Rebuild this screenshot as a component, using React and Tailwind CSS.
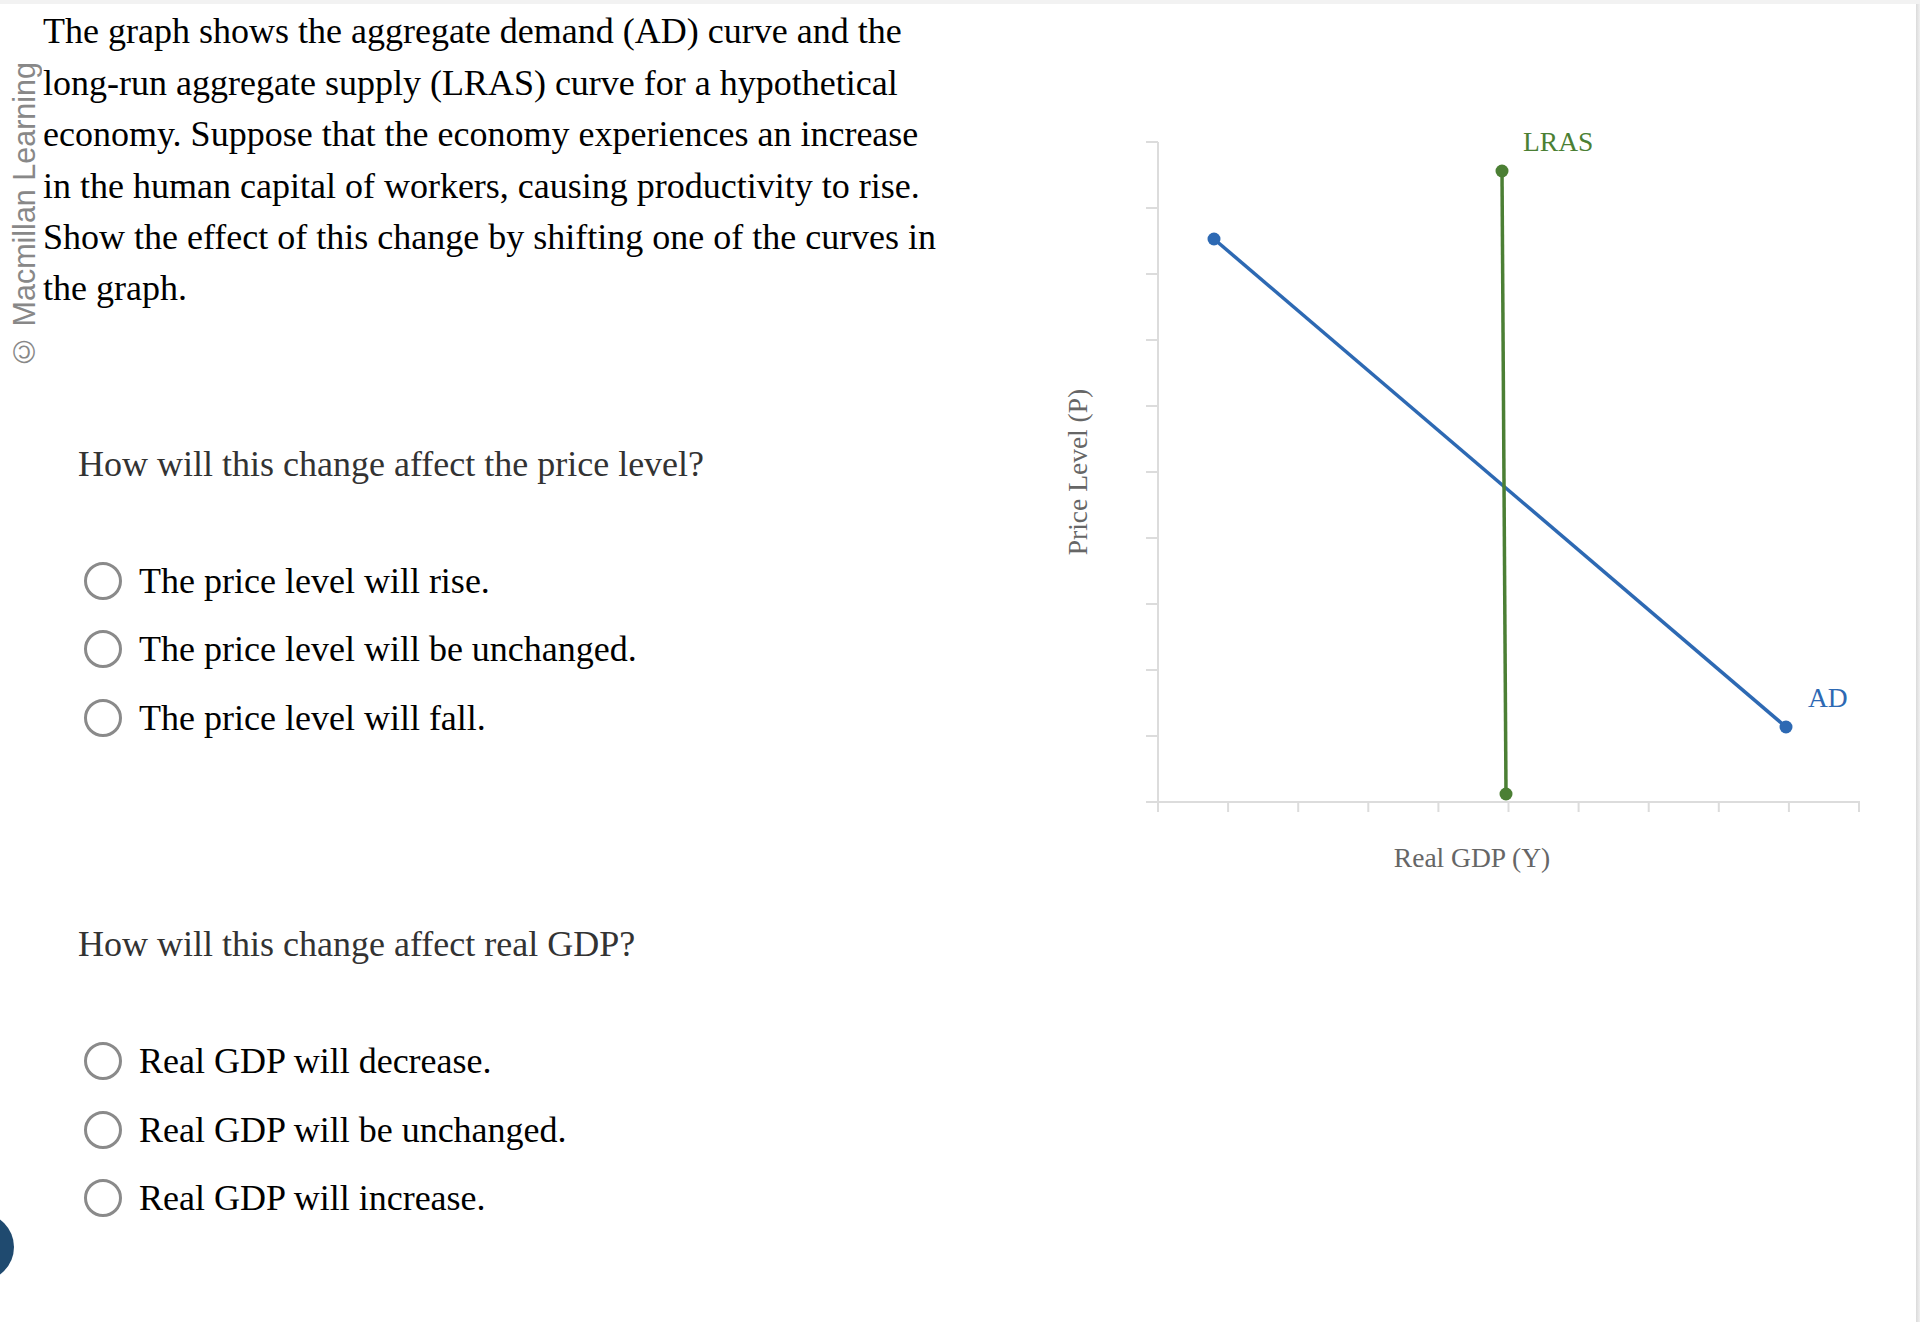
import React from "react";

const serif = "font-['Liberation_Serif','Times_New_Roman',serif]";

function Radio({ label }) {
  return (
    <div className="flex h-[68.5px] items-center">
      <span className="ml-[41px] block h-[38px] w-[38px] shrink-0 rounded-full border-[3px] border-[#8a8a8a] bg-white" />
      <span className="ml-[17px] text-[36px] leading-[40px] text-black">{label}</span>
    </div>
  );
}

function Question({ q, options, gapTop }) {
  return (
    <div className={gapTop}>
      <p className="ml-[35px] text-[36px] leading-[40px] text-[#333]">{q}</p>
      <div className="mt-[63px]">
        {options.map((o) => (
          <Radio key={o} label={o} />
        ))}
      </div>
    </div>
  );
}

function Graph() {
  const yTicks = Array.from({ length: 11 }, (_, i) => 138 + 66 * i);
  const xTicks = Array.from({ length: 11 }, (_, i) => 118 + 70.1 * i);
  const blue = "#2d69b3";
  const green = "#4b7f34";
  return (
    <svg width="876" height="900" viewBox="0 0 876 900" className={`block ${serif}`}>
      <line x1="118" y1="138" x2="118" y2="799" stroke="#dcdcdc" strokeWidth="2" />
      <line x1="106" y1="798" x2="820" y2="798" stroke="#dcdcdc" strokeWidth="2" />
      {yTicks.map((y) => (
        <line key={"y" + y} x1="106" y1={y} x2="118" y2={y} stroke="#dcdcdc" strokeWidth="2" />
      ))}
      {xTicks.map((x) => (
        <line key={"x" + x} x1={x} y1="798" x2={x} y2="808" stroke="#dcdcdc" strokeWidth="2" />
      ))}
      <line x1="174" y1="235" x2="746" y2="723" stroke={blue} strokeWidth="3.5" />
      <circle cx="174" cy="235" r="6.5" fill={blue} />
      <circle cx="746" cy="723" r="6.5" fill={blue} />
      <line x1="462" y1="167" x2="466" y2="790" stroke={green} strokeWidth="3.5" />
      <circle cx="462" cy="167" r="6.5" fill={green} />
      <circle cx="466" cy="790" r="6.5" fill={green} />
      <text x="483" y="147" fontSize="27.5" fill={green}>LRAS</text>
      <text x="768" y="703" fontSize="27.5" fill={blue}>AD</text>
      <text x="432" y="863" fontSize="27.5" fill="#666" textAnchor="middle">Real GDP (Y)</text>
      <g transform="translate(47 468) rotate(-90)">
        <text x="0" y="0" fontSize="27.5" fill="#666" textAnchor="middle">Price Level (P)</text>
      </g>
    </svg>
  );
}

export default function App() {
  return (
    <div className={`relative flex h-[1322px] w-[1920px] flex-col overflow-hidden bg-white ${serif}`}>
      <div className="h-[4px] w-full shrink-0 bg-[#f2f2f2]" />
      <div className="flex flex-1">
        <div className="flex flex-1">
          <div className="flex w-[1040px] shrink-0">
            <div className="w-[43px] shrink-0">
              <div className="ml-[9px] mt-[58px] rotate-180 font-['Liberation_Sans',Arial,sans-serif] text-[30.5px] leading-[30px] whitespace-nowrap text-[#888] [writing-mode:vertical-rl]">
                © Macmillan Learning
              </div>
            </div>
            <div className="flex-1">
              <p className="mt-[2.3px] w-[902px] text-[36px] leading-[51.4px] text-black">
                The graph shows the aggregate demand (AD) curve and the long-run aggregate supply (LRAS) curve for a hypothetical economy. Suppose that the economy experiences an increase in the human capital of workers, causing productivity to rise. Show the effect of this change by shifting one of the curves in the graph.
              </p>
              <Question
                gapTop="mt-[129px]"
                q="How will this change affect the price level?"
                options={[
                  "The price level will rise.",
                  "The price level will be unchanged.",
                  "The price level will fall.",
                ]}
              />
              <Question
                gapTop="mt-[172px]"
                q="How will this change affect real GDP?"
                options={[
                  "Real GDP will decrease.",
                  "Real GDP will be unchanged.",
                  "Real GDP will increase.",
                ]}
              />
            </div>
          </div>
          <div className="flex-1">
            <Graph />
          </div>
        </div>
        <div className="w-[4px] shrink-0 bg-gradient-to-r from-[#dadada] to-[#f0f0f0]" />
      </div>
      <div className="absolute left-[-54px] top-[1213px] h-[68px] w-[68px] rounded-full bg-[#1f4a6f]" />
    </div>
  );
}
